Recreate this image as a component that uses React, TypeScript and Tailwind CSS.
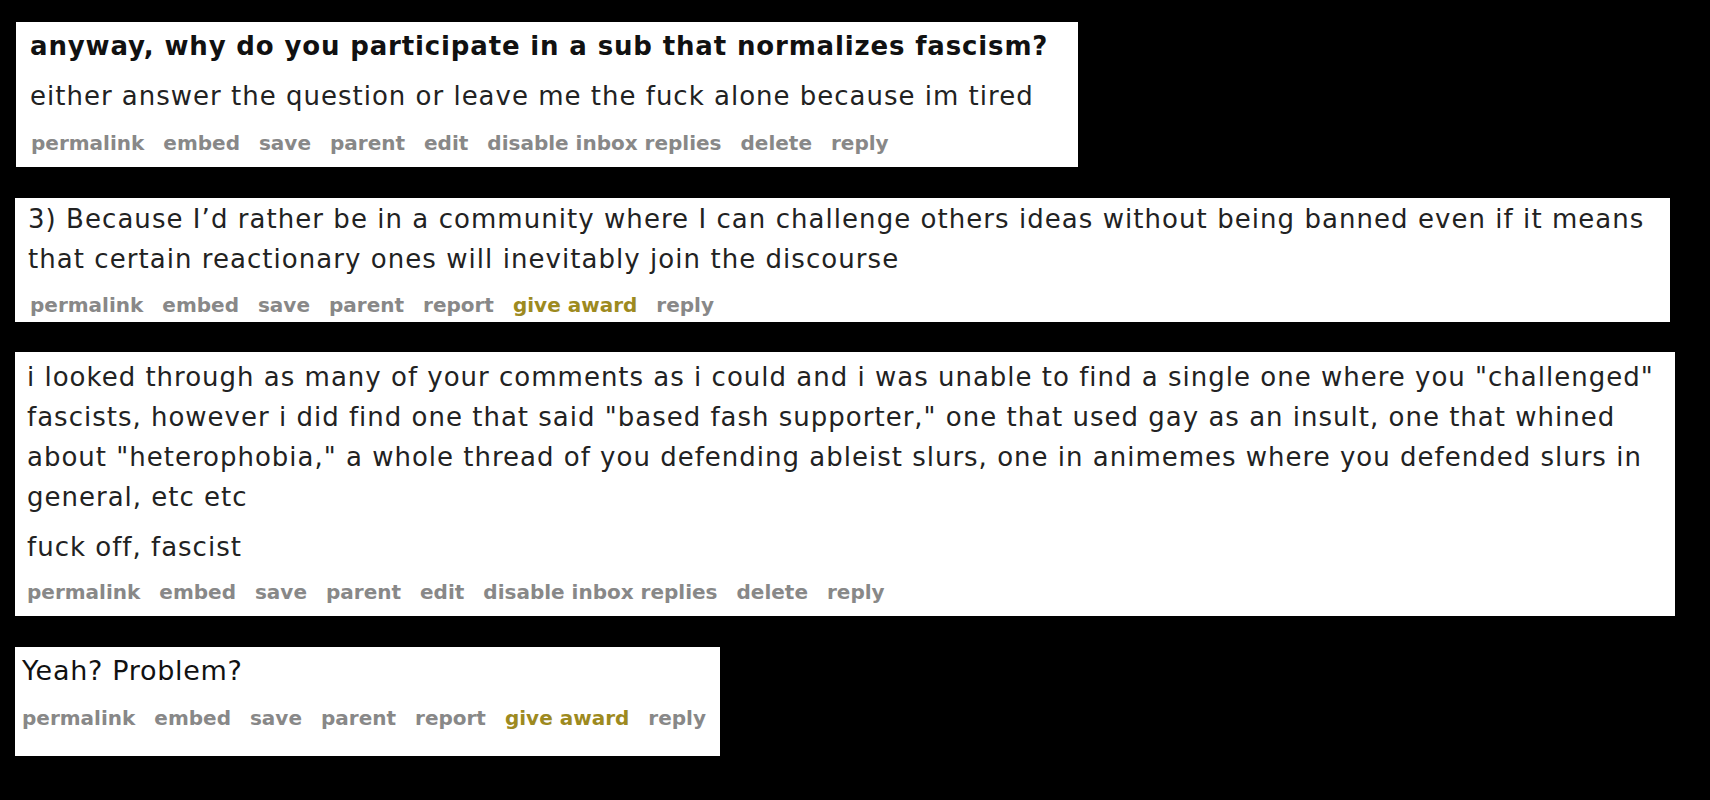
const font = "font-['DejaVu_Sans','Verdana',sans-serif]"

type Link = { label: string; award?: boolean }

const ownLinks: Link[] = [
  { label: 'permalink' },
  { label: 'embed' },
  { label: 'save' },
  { label: 'parent' },
  { label: 'edit' },
  { label: 'disable inbox replies' },
  { label: 'delete' },
  { label: 'reply' },
]

const otherLinks: Link[] = [
  { label: 'permalink' },
  { label: 'embed' },
  { label: 'save' },
  { label: 'parent' },
  { label: 'report' },
  { label: 'give award', award: true },
  { label: 'reply' },
]

function Buttons({ links, className = '' }: { links: Link[]; className?: string }) {
  return (
    <ul className={`flex gap-[19px] text-[20px] leading-[26px] font-bold tracking-normal whitespace-nowrap ${className}`}>
      {links.map((l) => (
        <li key={l.label} className={l.award ? 'text-[#9d8a1f]' : 'text-[#888888]'}>
          {l.label}
        </li>
      ))}
    </ul>
  )
}

export default function App() {
  return (
    <div className={`min-h-[800px] w-full bg-black pt-[22px] ${font}`}>
      {/* first comment */}
      <div className="ml-[16px] w-[1062px] bg-white pl-[14px] pt-[4px] pb-[11px] text-[26px] leading-[40px] tracking-[1px] text-[#222222]">
        <p className="font-bold tracking-[0.85px] text-[#111111] whitespace-nowrap">anyway, why do you participate in a sub that normalizes fascism?</p>
        <p className="mt-[10px] whitespace-nowrap">either answer the question or leave me the fuck alone because im tired</p>
        <Buttons links={ownLinks} className="mt-[14px] pl-[1px]" />
      </div>

      {/* reply */}
      <div className="mt-[31px] ml-[15px] w-[1655px] bg-white pl-[13px] pt-[1px] pb-[4px] text-[26px] leading-[40px] tracking-[1.05px] text-[#222222]">
        <p>
          <span className="block whitespace-nowrap">3) Because I’d rather be in a community where I can challenge others ideas without being banned even if it means</span>
          <span className="block whitespace-nowrap">that certain reactionary ones will inevitably join the discourse</span>
        </p>
        <Buttons links={otherLinks} className="mt-[13px] pl-[2px]" />
      </div>

      {/* long comment */}
      <div className="mt-[30px] ml-[15px] w-[1660px] bg-white pl-[12px] pt-[5px] pb-[11px] text-[26px] leading-[40px] tracking-[1px] text-[#222222]">
        <p>
          <span className="block whitespace-nowrap">i looked through as many of your comments as i could and i was unable to find a single one where you "challenged"</span>
          <span className="block whitespace-nowrap">fascists, however i did find one that said "based fash supporter," one that used gay as an insult, one that whined</span>
          <span className="block whitespace-nowrap">about "heterophobia," a whole thread of you defending ableist slurs, one in animemes where you defended slurs in</span>
          <span className="block whitespace-nowrap">general, etc etc</span>
        </p>
        <p className="mt-[10px]">fuck off, fascist</p>
        <Buttons links={ownLinks} className="mt-[12px]" />
      </div>

      {/* last reply */}
      <div className="mt-[31px] ml-[15px] w-[705px] bg-white pl-[7px] pt-[4px] pb-[25px] text-[27px] leading-[40px] tracking-[0.7px] text-[#111111]">
        <p>Yeah? Problem?</p>
        <Buttons links={otherLinks} className="mt-[14px]" />
      </div>
    </div>
  )
}
